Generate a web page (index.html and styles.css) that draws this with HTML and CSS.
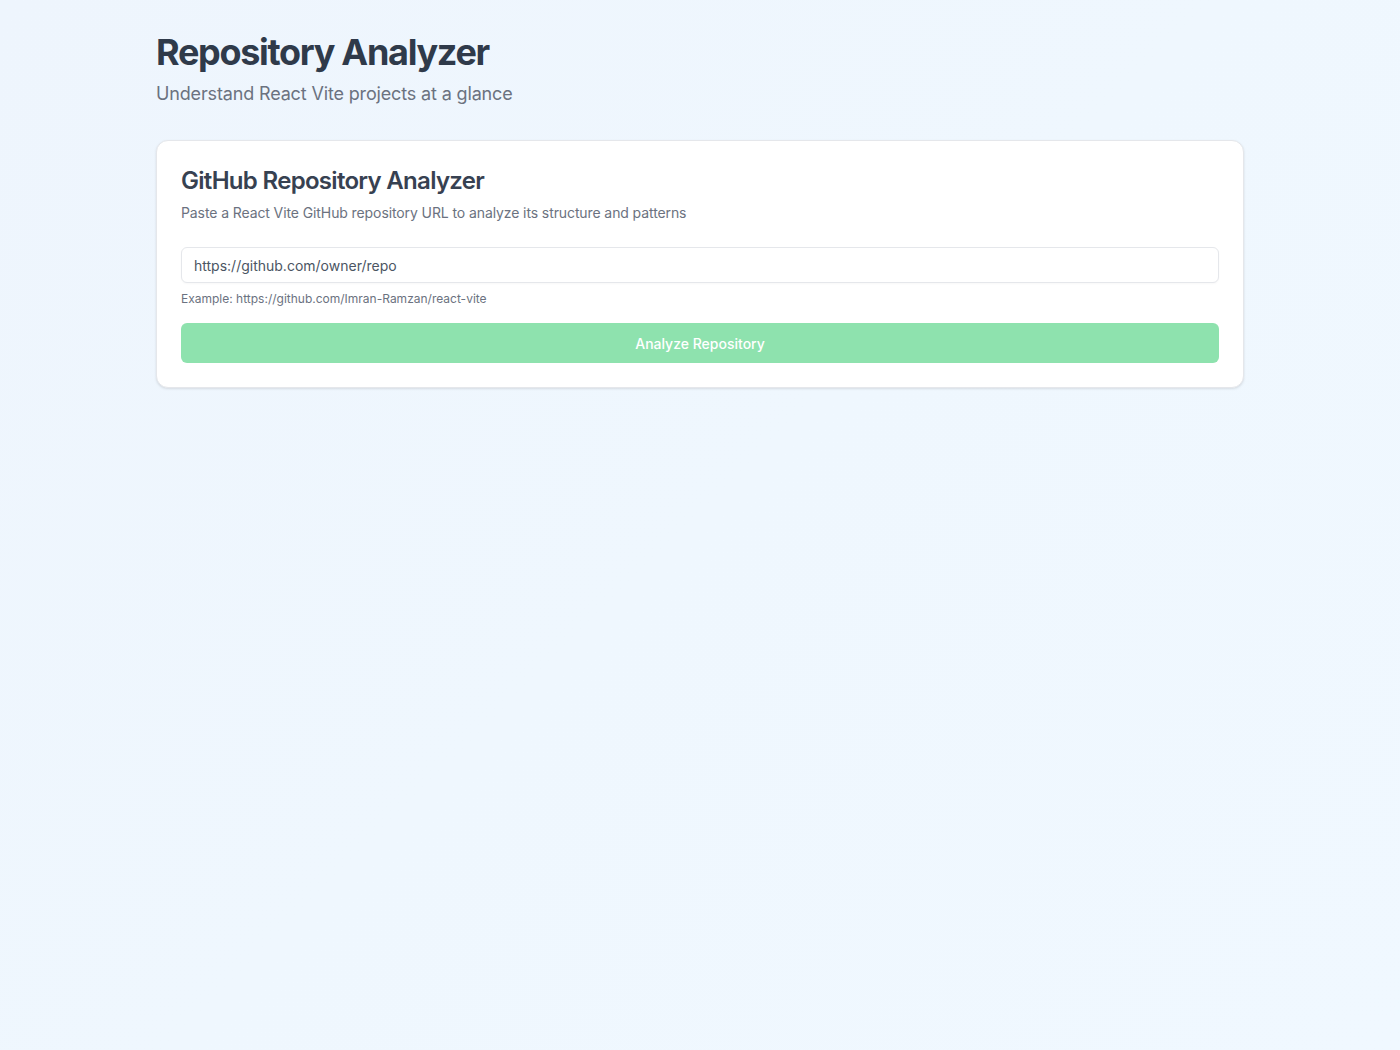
FILE: index.html
```html
<!DOCTYPE html>
<html lang="en">
<head>
<meta charset="utf-8">
<title>Repository Analyzer</title>
<link rel="stylesheet" href="styles.css">
</head>
<body>
<main class="page">
  <header class="page-header">
    <h1 class="page-title">Repository Analyzer</h1>
    <p class="page-subtitle">Understand React Vite projects at a glance</p>
  </header>
  <section class="card">
    <h2 class="card-title">GitHub Repository Analyzer</h2>
    <p class="card-desc">Paste a React Vite GitHub repository URL to analyze its structure and patterns</p>
    <form class="form">
      <input class="url-input" type="text" placeholder="https://github.com/owner/repo">
      <p class="hint">Example: https://github.com/Imran-Ramzan/react-vite</p>
      <button class="submit" type="button" disabled>Analyze Repository</button>
    </form>
  </section>
</main>
</body>
</html>
```

FILE: styles.css
```css
* { box-sizing: border-box; }
html, body { margin: 0; padding: 0; }
body {
  min-height: 1050px;
  font-family: "Inter", "Noto Sans", sans-serif;
  background: linear-gradient(135deg, #eef5fd 0%, #eff7fe 50%, #f0f8ff 100%);
  color: #334155;
}
.page {
  width: 1088px;
  margin: 0 auto;
  padding-top: 32px;
}
.page-title {
  margin: 0;
  font-size: 36px;
  line-height: 40px;
  font-weight: 700;
  color: #2f3a4a;
  letter-spacing: -1.3px;
}
.page-subtitle {
  margin: 8px 0 0;
  font-size: 18px;
  line-height: 28px;
  color: #6b7280;
  letter-spacing: -0.15px;
}
.card {
  margin-top: 32px;
  background: #fff;
  border: 1px solid #e5e7eb;
  border-radius: 12px;
  padding: 24px;
  box-shadow: 0 1px 3px rgba(0,0,0,0.08), 0 1px 2px rgba(0,0,0,0.04);
}
.card-title {
  margin: 0;
  font-size: 24px;
  line-height: 32px;
  font-weight: 600;
  color: #374151;
  letter-spacing: -0.7px;
}
.card-desc {
  margin: 6px 0 0;
  font-size: 14px;
  line-height: 20px;
  color: #6b7280;
  letter-spacing: -0.1px;
}
.form {
  margin-top: 24px;
}
.url-input {
  display: block;
  width: 100%;
  height: 36px;
  padding: 0 12px;
  border: 1px solid #e5e7eb;
  border-radius: 6px;
  font-family: inherit;
  font-size: 14px;
  color: #374151;
  background: #fff;
  box-shadow: 0 1px 2px rgba(0,0,0,0.03);
}
.url-input::placeholder { color: #4b5563; }
.hint {
  margin: 8px 0 0;
  font-size: 12px;
  line-height: 16px;
  color: #6b7280;
}
.submit {
  display: block;
  width: 100%;
  height: 40px;
  margin-top: 16px;
  border: 0;
  border-radius: 6px;
  background: #8ee2ae;
  color: #fff;
  font-family: inherit;
  font-size: 14px;
  font-weight: 500;
}
```
